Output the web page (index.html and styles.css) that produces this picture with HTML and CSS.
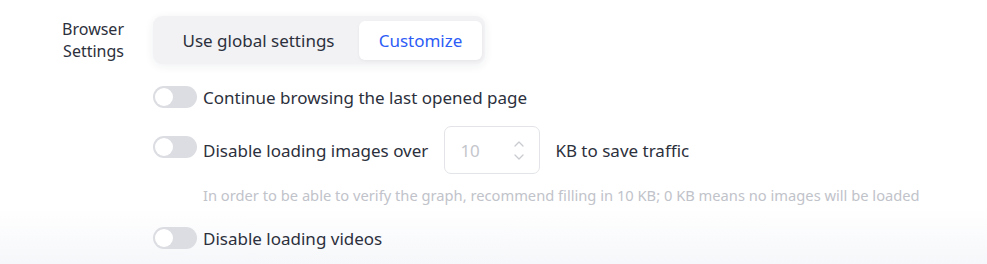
FILE: index.html
```html
<!DOCTYPE html>
<html>
<head>
<meta charset="utf-8">
<link rel="stylesheet" href="styles.css">
</head>
<body>
<div class="form">
  <div class="label">Browser<br>Settings</div>
  <div class="content">
    <div class="segmented">
      <div class="seg-item">Use global settings</div>
      <div class="seg-item active">Customize</div>
    </div>
    <div class="row row1">
      <span class="toggle"><span class="knob"></span></span>
      <span class="text">Continue browsing the last opened page</span>
    </div>
    <div class="row row2">
      <span class="toggle"><span class="knob"></span></span>
      <span class="text">Disable loading images over</span>
      <div class="num">
        <span class="num-val">10</span>
        <span class="spin">
          <svg width="12" height="8" viewBox="0 0 12 8"><path d="M2 6 L6 2 L10 6" fill="none" stroke="#c9cbd0" stroke-width="1.3" stroke-linecap="round" stroke-linejoin="round"/></svg>
          <svg width="12" height="8" viewBox="0 0 12 8"><path d="M2 2 L6 6 L10 2" fill="none" stroke="#c9cbd0" stroke-width="1.3" stroke-linecap="round" stroke-linejoin="round"/></svg>
        </span>
      </div>
      <span class="text">KB to save traffic</span>
    </div>
    <div class="hint">In order to be able to verify the graph, recommend filling in 10 KB; 0 KB means no images will be loaded</div>
    <div class="row row3">
      <span class="toggle"><span class="knob"></span></span>
      <span class="text">Disable loading videos</span>
    </div>
  </div>
</div>
</body>
</html>
```
FILE: styles.css
```css
html, body {
  margin: 0;
  padding: 0;
}
body {
  width: 987px;
  height: 264px;
  overflow: hidden;
  font-family: "Noto Sans", "Open Sans", sans-serif;
  color: #2c303c;
  background: linear-gradient(to bottom, #ffffff 0px, #ffffff 208px, #f6f7fa 264px);
}
.form {
  display: grid;
  grid-template-columns: 124px auto;
  column-gap: 29px;
  padding-top: 16px;
}
.label {
  text-align: right;
  font-size: 16px;
  line-height: 22px;
  height: 48px;
  display: flex;
  align-items: center;
  justify-content: flex-end;
  color: #2c303c;
}
.content {
  display: flex;
  flex-direction: column;
  align-items: flex-start;
}
.segmented {
  display: flex;
  align-items: center;
  height: 48px;
  box-sizing: border-box;
  padding: 5px 3px 4px 5px;
  background: #f2f2f4;
  border-radius: 9px;
  box-shadow: 0 2px 10px rgba(30, 40, 70, 0.07);
}
.seg-item {
  height: 39px;
  display: flex;
  align-items: center;
  justify-content: center;
  font-size: 17px;
  color: #2c303c;
  border-radius: 6px;
}
.seg-item:first-child {
  width: 201px;
}
.seg-item.active {
  width: 123px;
  background: #ffffff;
  color: #2d5cf6;
  box-shadow: 0 1px 3px rgba(30, 40, 70, 0.06);
}
.row {
  display: flex;
  align-items: center;
  font-size: 17px;
}
.row1 {
  margin-top: 22px;
  height: 22px;
}
.row2 {
  margin-top: 18px;
  height: 48px;
}
.row3 {
  margin-top: 22px;
  height: 22px;
}
.toggle {
  width: 44px;
  height: 22px;
  border-radius: 11px;
  background: #dcdde2;
  position: relative;
  flex: none;
  margin-right: 6px;
}
.knob {
  position: absolute;
  left: 2px;
  top: 2px;
  width: 18px;
  height: 18px;
  border-radius: 50%;
  background: #ffffff;
}
.row2 .toggle {
  align-self: flex-start;
  margin-top: 10px;
}
.num {
  width: 96px;
  height: 48px;
  box-sizing: border-box;
  border: 1px solid #e3e4e8;
  border-radius: 7px;
  margin-left: 16px;
  margin-right: 15px;
  display: flex;
  align-items: center;
  justify-content: space-between;
  padding: 0 14px 0 15px;
}
.num-val {
  color: #c4c6cc;
  font-size: 17px;
}
.spin {
  display: flex;
  flex-direction: column;
  gap: 5px;
}
.spin svg {
  display: block;
}
.hint {
  margin-top: 11px;
  margin-left: 50px;
  font-size: 14.7px;
  line-height: 20px;
  color: #c1c3ca;
}
```
